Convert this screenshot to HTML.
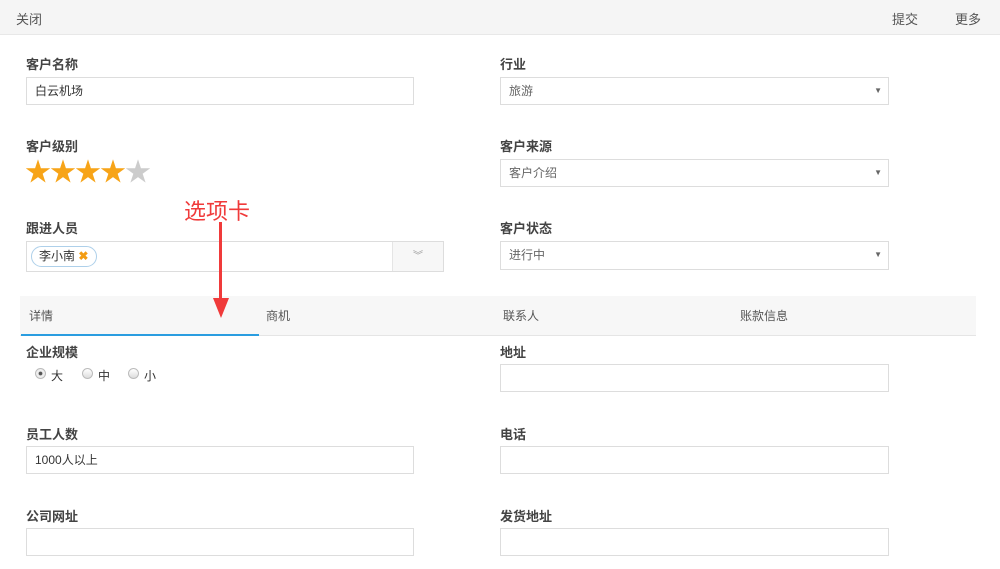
<!DOCTYPE html>
<html><head><meta charset="utf-8"><style>
*{box-sizing:border-box;margin:0;padding:0}
body{width:1000px;height:569px;overflow:hidden;background:#fff;font-family:"Liberation Sans","Noto Sans CJK SC",sans-serif;color:#333;position:relative}
.a{position:absolute}
.hdr{left:0;top:0;width:1000px;height:35px;background:#f5f5f5;border-bottom:1px solid #e8e8e8}
.t{font-size:13px;color:#555}
.lbl{font-size:13px;font-weight:bold;color:#444}
.in{border:1px solid #ddd;background:#fff;height:28px;font-size:12px;color:#333;line-height:26px;padding-left:8px}
.sel{color:#666}
.sel:after{content:"▼";position:absolute;right:6px;top:0;font-size:8px;color:#666}
.tab{font-size:12px;color:#555;top:307px}
.radio{width:11px;height:11px;border-radius:50%;border:1px solid #bbb;background:linear-gradient(#fff,#ddd);top:368px}
</style></head><body>
<div class="a hdr"></div>
<div class="a t" style="left:16px;top:9px">关闭</div>
<div class="a t" style="left:892px;top:9px">提交</div>
<div class="a t" style="left:955px;top:9px">更多</div>

<div class="a lbl" style="left:26px;top:54px">客户名称</div>
<div class="a in" style="left:26px;top:77px;width:388px">白云机场</div>
<div class="a lbl" style="left:500px;top:54px">行业</div>
<div class="a in sel" style="left:500px;top:77px;width:389px">旅游</div>

<div class="a lbl" style="left:26px;top:136px">客户级别</div>
<div class="a" style="left:25px;top:159px;font-size:26px;line-height:26px;letter-spacing:-1px"><span style="color:#f7a418">★★★★</span><span style="color:#ccc">★</span></div>
<div class="a lbl" style="left:500px;top:136px">客户来源</div>
<div class="a in sel" style="left:500px;top:159px;width:389px">客户介绍</div>

<div class="a lbl" style="left:26px;top:218px">跟进人员</div>
<div class="a in" style="left:26px;top:241px;width:418px;height:31px;padding:0"></div>
<div class="a" style="left:392px;top:242px;width:51px;height:29px;background:#f7f7f7;border-left:1px solid #e5e5e5;text-align:center;font-size:10px;color:#999;line-height:29px">︾</div>
<div class="a" style="left:31px;top:246px;width:66px;height:21px;border:1px solid #aed0ea;border-radius:11px;font-size:12px;line-height:19px;padding-left:7px">李小南 <span style="color:#f39c12;font-weight:bold">✖</span></div>
<div class="a lbl" style="left:500px;top:218px">客户状态</div>
<div class="a in sel" style="left:500px;top:241px;width:389px;height:29px">进行中</div>

<div class="a" style="left:184px;top:194px;font-size:22px;color:#f03a3a">选项卡</div>

<div class="a" style="left:20px;top:296px;width:956px;height:40px;background:#f7f7f7;border-bottom:1px solid #e5e5e5"></div>
<div class="a" style="left:21px;top:334px;width:238px;height:2px;background:#2a9de0"></div>
<div class="a" style="left:219px;top:222px;width:3px;height:80px;background:#f03a3a"></div>
<div class="a" style="left:213px;top:298px;width:0;height:0;border-left:8px solid transparent;border-right:8px solid transparent;border-top:20px solid #f03a3a"></div>
<div class="a tab" style="left:29px">详情</div>
<div class="a tab" style="left:266px">商机</div>
<div class="a tab" style="left:503px">联系人</div>
<div class="a tab" style="left:740px">账款信息</div>

<div class="a lbl" style="left:26px;top:342px">企业规模</div>
<div class="a radio" style="left:35px;background:radial-gradient(#555 25%,#eee 35%)"></div><div class="a" style="left:51px;top:367px;font-size:12px">大</div>
<div class="a radio" style="left:82px"></div><div class="a" style="left:98px;top:367px;font-size:12px">中</div>
<div class="a radio" style="left:128px"></div><div class="a" style="left:144px;top:367px;font-size:12px">小</div>
<div class="a lbl" style="left:500px;top:342px">地址</div>
<div class="a in" style="left:500px;top:364px;width:389px">&nbsp;</div>

<div class="a lbl" style="left:26px;top:424px">员工人数</div>
<div class="a in" style="left:26px;top:446px;width:388px">1000人以上</div>
<div class="a lbl" style="left:500px;top:424px">电话</div>
<div class="a in" style="left:500px;top:446px;width:389px">&nbsp;</div>

<div class="a lbl" style="left:26px;top:506px">公司网址</div>
<div class="a in" style="left:26px;top:528px;width:388px">&nbsp;</div>
<div class="a lbl" style="left:500px;top:506px">发货地址</div>
<div class="a in" style="left:500px;top:528px;width:389px">&nbsp;</div>
</body></html>
